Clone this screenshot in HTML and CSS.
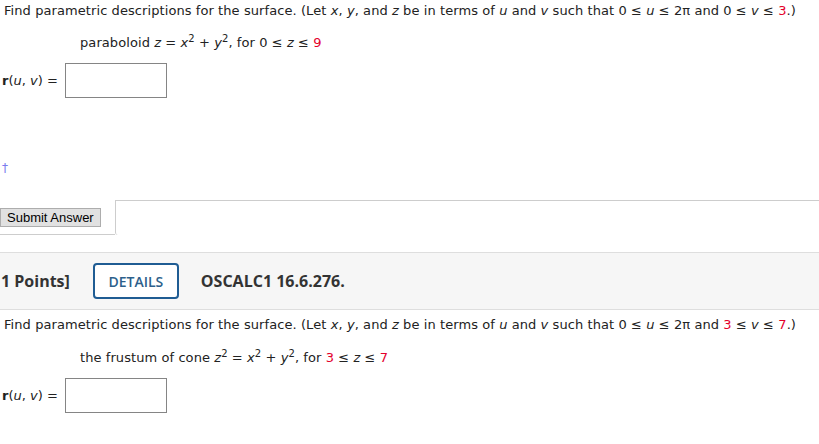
FILE: index.html
```html
<!DOCTYPE html>
<html>
<head>
<meta charset="utf-8">
<link rel="stylesheet" href="styles.css">
</head>
<body>
<div class="question q1">
  <p class="prompt">Find parametric descriptions for the surface. (Let <i>x</i>, <i>y</i>, and <i>z</i> be in terms of <i>u</i> and <i>v</i> such that 0 ≤ <i>u</i> ≤ 2π and 0 ≤ <i>v</i> ≤ <span class="red">3</span>.)</p>
  <p class="given">paraboloid <i>z</i> = <i>x</i><sup>2</sup> + <i>y</i><sup>2</sup>, for 0 ≤ <i>z</i> ≤ <span class="red">9</span></p>
  <div class="answer-row"><span class="label"><b>r</b>(<i>u</i>, <i>v</i>) =</span><span class="input"></span></div>
  <div class="dagger">†</div>
  <div class="submit-row">
    <div class="submit-cell"><button class="submit">Submit Answer</button></div>
    <div class="feedback-cell"></div>
  </div>
</div>
<div class="header">
  <span class="points">1 Points]</span>
  <span class="details">DETAILS</span>
  <span class="code">OSCALC1 16.6.276.</span>
</div>
<div class="question q2">
  <p class="prompt">Find parametric descriptions for the surface. (Let <i>x</i>, <i>y</i>, and <i>z</i> be in terms of <i>u</i> and <i>v</i> such that 0 ≤ <i>u</i> ≤ 2π and <span class="red">3</span> ≤ <i>v</i> ≤ <span class="red">7</span>.)</p>
  <p class="given">the frustum of cone <i>z</i><sup>2</sup> = <i>x</i><sup>2</sup> + <i>y</i><sup>2</sup>, for <span class="red">3</span> ≤ <i>z</i> ≤ <span class="red">7</span></p>
  <div class="answer-row"><span class="label"><b>r</b>(<i>u</i>, <i>v</i>) =</span><span class="input"></span></div>
</div>
</body>
</html>
```
FILE: styles.css
```css
html, body {
  margin: 0;
  padding: 0;
  background: #fff;
}
body {
  font-family: "DejaVu Sans", Verdana, sans-serif;
  font-size: 13px;
  color: #222;
  overflow: hidden;
}
.question p {
  margin: 0;
  line-height: 16px;
  white-space: nowrap;
  letter-spacing: 0.08px;
}
.prompt {
  padding-left: 4px;
}
.q1 .prompt {
  padding-top: 3px;
}
.q2 .prompt {
  padding-top: 7px;
}
.given {
  margin-top: 16px !important;
  padding-left: 80px;
}
sup {
  font-size: 10px;
  line-height: 0;
  vertical-align: 5px;
}
.red {
  color: #e4002b;
}
.answer-row {
  display: flex;
  align-items: center;
  margin-top: 12px;
  padding-left: 2px;
  gap: 6px;
}
.input {
  display: block;
  width: 100px;
  height: 33px;
  border: 1px solid #858585;
  background: #fff;
}
.label {
  width: 57px;
  white-space: nowrap;
}
.dagger {
  margin-top: 62px;
  line-height: 16px;
  padding-left: 2px;
  color: #7a7aee;
  font-size: 12px;
}
.submit-row {
  display: flex;
  margin-top: 24px;
  height: 35px;
}
.submit-cell {
  width: 115px;
  border-bottom: 1px solid #cdcdcd;
  padding-top: 8px;
  box-sizing: border-box;
}
.submit {
  display: block;
  font-family: "Liberation Sans", Arial, sans-serif;
  font-size: 13px;
  color: #000;
  background: #e1e1e1;
  border: 1px solid #adadad;
  padding: 0 6px;
  height: 19px;
  line-height: 17px;
  white-space: nowrap;
  margin: 0;
}
.feedback-cell {
  flex: 1;
  border-top: 1px solid #cdcdcd;
  border-left: 1px solid #cdcdcd;
  border-bottom-left-radius: 3px;
}
.header {
  margin-top: 17px;
  height: 58px;
  box-sizing: border-box;
  background: #f6f6f6;
  border-top: 1px solid #dedede;
  border-bottom: 1px solid #dedede;
  display: flex;
  align-items: center;
  font-family: "Open Sans", sans-serif;
  color: #333;
  padding-left: 1px;
}
.points {
  font-weight: 700;
  font-size: 16px;
  margin-right: 23px;
}
.details {
  display: flex;
  align-items: center;
  justify-content: center;
  width: 86px;
  height: 36px;
  box-sizing: border-box;
  border: 2px solid #1f5c93;
  border-radius: 4px;
  font-size: 14px;
  font-weight: 600;
  color: #2d5f8b;
  margin-right: 22px;
  background: #fff;
}
.code {
  font-weight: 700;
  font-size: 16px;
}
.q2 .given {
  margin-top: 17px !important;
}
```
